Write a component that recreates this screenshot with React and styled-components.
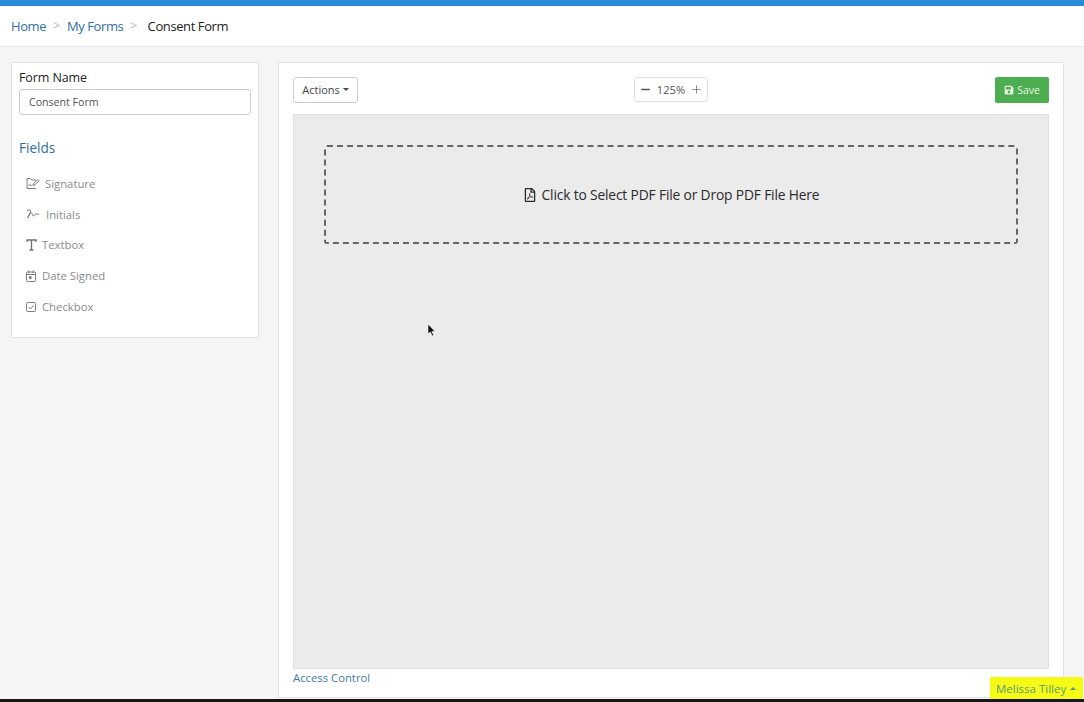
import React from "react";
import styled, { createGlobalStyle } from "styled-components";
import { FaRegFilePdf, FaSave } from "react-icons/fa";
import { Minus, Plus } from "lucide-react";

const GlobalStyle = createGlobalStyle`
  html, body { margin: 0; padding: 0; height: 100%; overflow: hidden; }
  body { font-family: "Open Sans", "Liberation Sans", sans-serif; background: #f5f5f5; color: #333; }
  * { box-sizing: border-box; }
`;

const Page = styled.div`
  position: relative;
  width: 1084px;
  height: 702px;
  display: flex;
  flex-direction: column;
  background: #f5f5f5;
  border-bottom: 3px solid #161616;
`;

const Header = styled.header`
  height: 47px;
  flex: none;
  border-top: 6px solid #2a8cd6;
  border-bottom: 1px solid #e9e9e9;
  background: #fff;
  display: flex;
  align-items: center;
  padding: 0 0 1px 11px;
  font-size: 13px;
  letter-spacing: -0.4px;
`;

const Crumb = styled.a`
  color: #2f6f9f;
`;

const Sep = styled.span`
  color: #bbb;
  font-size: 12.5px;
  margin: 0 7px;
`;

const Current = styled.span`
  color: #222;
  margin-left: 3.5px;
`;

const Body = styled.div`
  flex: 1;
  min-height: 0;
  display: grid;
  grid-template-columns: 248px 786px;
  column-gap: 19px;
  align-items: start;
  padding: 15px 0 2px 11px;
`;

const Panel = styled.section`
  background: #fff;
  border: 1px solid #e2e2e2;
  border-radius: 2px;
  box-shadow: 0 0 1px rgba(0, 0, 0, 0.05);
`;

const Sidebar = styled(Panel)`
  height: 276px;
  padding: 6px 7px 0;
`;

const Label = styled.div`
  font-size: 12.5px;
  letter-spacing: -0.1px;
  line-height: 17px;
  color: #222;
`;

const NameInput = styled.div`
  margin-top: 3px;
  height: 26px;
  border: 1px solid #ccc;
  border-radius: 3px;
  padding: 0 9px;
  display: flex;
  align-items: center;
  font-size: 10.6px;
  color: #555;
`;

const FieldsTitle = styled.h3`
  margin: 23px 0 10px;
  font-size: 13.6px;
  line-height: 20px;
  font-weight: 500;
  color: #2f6f9f;
`;

const FieldList = styled.ul`
  list-style: none;
  margin: 0;
  padding: 0 0 0 7px;
`;

const Field = styled.li`
  height: 30.8px;
  display: flex;
  align-items: center;
  gap: ${(p) => p.$gap || 5}px;
  font-size: 11.3px;
  color: #8a8a8a;
  svg { flex: none; color: #6f6f6f; }
`;

const Main = styled(Panel)`
  height: 636px;
  padding: 14px 14px 0;
  display: flex;
  flex-direction: column;
`;

const Toolbar = styled.div`
  height: 37px;
  flex: none;
  display: grid;
  grid-template-columns: 1fr auto 1fr;
  align-items: start;
`;

const ActionsButton = styled.button`
  height: 26px;
  width: 65px;
  padding: 0 0 1px;
  background: #fff;
  border: 1px solid #ccc;
  border-radius: 3px;
  font: inherit;
  font-size: 11px;
  color: #444;
  display: flex;
  align-items: center;
  justify-content: center;
  gap: 3px;
`;

const Caret = styled.span`
  width: 0;
  height: 0;
  border-left: 3px solid transparent;
  border-right: 3px solid transparent;
  border-${(p) => (p.$up ? "bottom" : "top")}: 3px solid ${(p) => p.$color || "#444"};
`;

const ZoomBox = styled.div`
  width: 74px;
  height: 25px;
  border: 1px solid #e2e2e2;
  border-radius: 3px;
  display: flex;
  align-items: center;
  justify-content: space-between;
  padding: 0 4px;
  font-size: 11.2px;
  color: #555;
`;

const SaveButton = styled.button`
  justify-self: end;
  height: 26px;
  width: 54px;
  padding: 0;
  border: none;
  border-radius: 2px;
  background: #4cae50;
  color: #e6f4e6;
  font: inherit;
  font-size: 10.5px;
  display: flex;
  align-items: center;
  justify-content: center;
  gap: 3px;
`;

const Canvas = styled.div`
  height: 555px;
  flex: none;
  background: #ebebeb;
  border: 1px solid #e0e0e0;
  padding: 30px;
`;

const DropZone = styled.div`
  height: 99px;
  border: 2px dashed #666;
  border-radius: 3px;
  display: flex;
  align-items: center;
  justify-content: center;
  gap: 5px;
  font-size: 13.8px;
  letter-spacing: -0.16px;
  color: #2a2a2a;
`;

const AccessLink = styled.a`
  margin-top: 1px;
  font-size: 11.3px;
  line-height: 16px;
  color: #3f7aa6;
`;

const UserTag = styled.div`
  position: absolute;
  right: 1px;
  bottom: 0;
  width: 93px;
  height: 22px;
  background: #f5fb14;
  display: flex;
  align-items: center;
  justify-content: flex-start;
  padding-left: 6px;
  gap: 4px;
  font-size: 11.5px;
  color: #5c9a7e;
  white-space: nowrap;
`;

const Cursor = styled.svg`
  position: absolute;
  left: 427px;
  top: 323px;
`;

const SignatureIcon = () => (
  <svg width="14" height="13" viewBox="0 0 14 13" fill="none" stroke="currentColor" strokeWidth="0.9">
    <path d="M10 11.5H1V1.5h3.5L6 3h4" />
    <path d="M2.5 9c1-2.2 1.5-2.2 2-.7s1-.5 1.7-.5" />
    <path d="M7 8.5l.5-2.2L12 2.5l1.2 1.2-4.4 4.1z" />
  </svg>
);

const InitialsIcon = () => (
  <svg width="14" height="10" viewBox="0 0 14 10" fill="none" stroke="currentColor" strokeWidth="1">
    <path d="M1 2C2.8 0 5.5.6 4.5 3 3.8 5 2.2 7.5 1.5 9 3.5 5.5 5 3.6 6 4.4c1 .9.4 3 1.8 2.4 1.2-.6 1.7-2.4 3-2 .8.2 1.5.6 2.2.6" />
  </svg>
);

const TextIcon = () => (
  <svg width="11" height="12" viewBox="0 0 11 12" fill="none" stroke="currentColor" strokeWidth="1.3">
    <path d="M1 3V1h9v2M5.5 1v10M3.5 11h4" />
  </svg>
);

const DateIcon = () => (
  <svg width="10" height="12" viewBox="0 0 10 12" fill="none" stroke="currentColor" strokeWidth="0.9">
    <rect x="0.5" y="2" width="9" height="9.5" rx="1" />
    <path d="M0.5 4.5h9M2.7 0.5v2.5M7.3 0.5v2.5" />
    <rect x="3" y="6.3" width="2.5" height="2.5" fill="currentColor" stroke="none" />
  </svg>
);

const CheckIcon = () => (
  <svg width="10" height="10" viewBox="0 0 10 10" fill="none" stroke="currentColor" strokeWidth="0.9">
    <rect x="0.5" y="0.5" width="9" height="9" rx="1" />
    <path d="M2.5 5l2 2 3-3.7" />
  </svg>
);

const App = () => (
  <>
    <GlobalStyle />
    <Page>
      <Header>
        <Crumb>Home</Crumb>
        <Sep>&gt;</Sep>
        <Crumb>My Forms</Crumb>
        <Sep>&gt;</Sep>
        <Current>Consent Form</Current>
      </Header>
      <Body>
        <Sidebar>
          <Label>Form Name</Label>
          <NameInput>Consent Form</NameInput>
          <FieldsTitle>Fields</FieldsTitle>
          <FieldList>
            <Field $gap={5}><SignatureIcon />Signature</Field>
            <Field $gap={6}><InitialsIcon />Initials</Field>
            <Field $gap={5}><TextIcon />Textbox</Field>
            <Field $gap={6}><DateIcon />Date Signed</Field>
            <Field $gap={6}><CheckIcon />Checkbox</Field>
          </FieldList>
        </Sidebar>
        <Main>
          <Toolbar>
            <ActionsButton>Actions <Caret /></ActionsButton>
            <ZoomBox>
              <Minus size={13} strokeWidth={2.4} />
              <span>125%</span>
              <Plus size={13} strokeWidth={1.2} />
            </ZoomBox>
            <SaveButton><FaSave size={10} />Save</SaveButton>
          </Toolbar>
          <Canvas>
            <DropZone>
              <FaRegFilePdf size={14} />
              Click to Select PDF File or Drop PDF File Here
            </DropZone>
          </Canvas>
          <AccessLink>Access Control</AccessLink>
        </Main>
      </Body>
      <UserTag>Melissa Tilley <Caret $up $color="#5c9a7e" /></UserTag>
      <Cursor width="9" height="14" viewBox="0 0 9 14">
        <path d="M1 1v10l2.4-2 1.7 4 1.6-.7-1.7-3.8H8z" fill="#111" stroke="#fff" strokeWidth="0.6" />
      </Cursor>
    </Page>
  </>
);

export default App;
